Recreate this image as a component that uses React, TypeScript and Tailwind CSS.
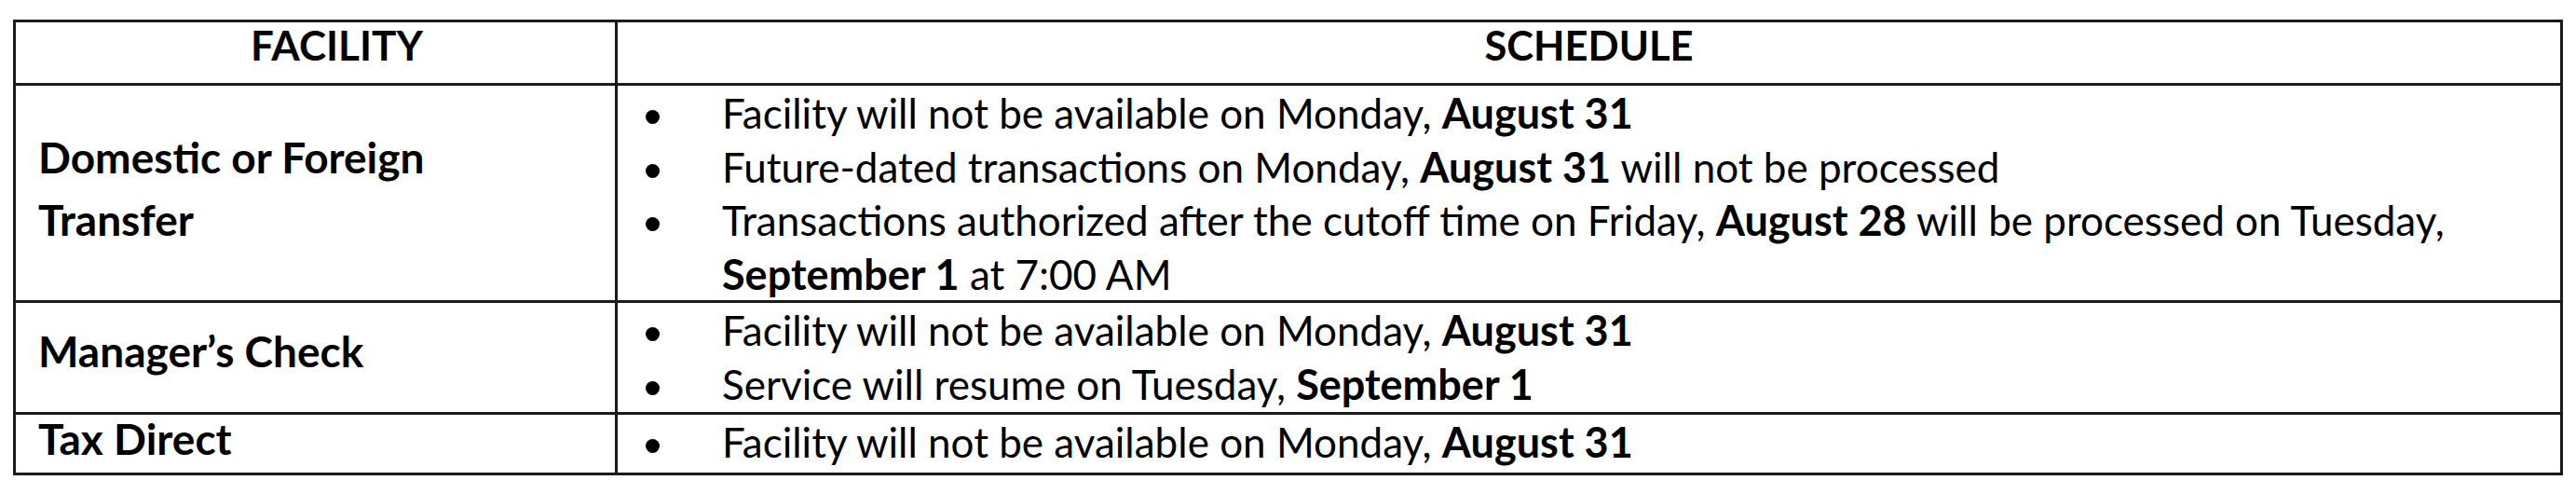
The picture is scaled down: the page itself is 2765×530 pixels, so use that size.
import React from "react";

function Dot() {
  return (
    <span className="w-[112px] shrink-0 self-start">
      <span className="block ml-[30px] mt-[25px] w-[15px] h-[15px] rounded-full bg-black" />
    </span>
  );
}

function Item({ children }: { children: React.ReactNode }) {
  return (
    <div className="flex">
      <Dot />
      <span>{children}</span>
    </div>
  );
}

function B({ children }: { children: React.ReactNode }) {
  return <b className="font-bold text-[45px]">{children}</b>;
}

export default function App() {
  const font = { fontFamily: "Lato, 'Liberation Sans', sans-serif" };
  return (
    <div className="w-[2765px] h-[530px] bg-white text-black pt-[21px] pl-[14px]" style={font}>
      <div className="grid grid-cols-[646px_2088px] grid-rows-[68px_233px_120px_65px] w-[2737px] border-l-[3px] border-t-[3px] border-[#1b1b1b] text-[44px]">
        {/* header */}
        <div className="flex items-center justify-center pl-[46px] pb-[17px] leading-[44px] font-bold border-r-[3px] border-b-[3px] border-[#1b1b1b]">
          FACILITY
        </div>
        <div className="flex items-center justify-center pb-[17px] leading-[44px] font-bold text-[43.5px] border-r-[3px] border-b-[3px] border-[#1b1b1b]">
          SCHEDULE
        </div>

        {/* row 1 */}
        <div className="flex items-center pl-[24px] pb-[9px] leading-[66.5px] font-bold text-[46px] border-r-[3px] border-b-[3px] border-[#1b1b1b]">
          <span>
            Domestic or Foreign
            <br />
            Transfer
          </span>
        </div>
        <div className="leading-[57.7px] pt-[1px] border-r-[3px] border-b-[3px] border-[#1b1b1b]">
          <Item>
            Facility will not be available on Monday, <B>August 31</B>
          </Item>
          <Item>
            Future-dated transactions on Monday, <B>August 31</B> will not be processed
          </Item>
          <Item>
            Transactions authorized after the cutoff time on Friday, <B>August 28</B> will be processed on Tuesday,
            <br />
            <B>September 1</B> at 7:00 AM
          </Item>
        </div>

        {/* row 2 */}
        <div className="flex items-center pl-[24px] pb-[14px] leading-[46px] font-bold text-[46px] border-r-[3px] border-b-[3px] border-[#1b1b1b]">
          Manager’s Check
        </div>
        <div className="leading-[57.7px] pt-[1px] border-r-[3px] border-b-[3px] border-[#1b1b1b]">
          <Item>
            Facility will not be available on Monday, <B>August 31</B>
          </Item>
          <Item>
            Service will resume on Tuesday, <B>September 1</B>
          </Item>
        </div>

        {/* row 3 */}
        <div className="flex items-center pl-[24px] pb-[11px] leading-[46px] font-bold text-[46px] border-r-[3px] border-b-[3px] border-[#1b1b1b]">
          Tax Direct
        </div>
        <div className="leading-[57.7px] pt-[1px] border-r-[3px] border-b-[3px] border-[#1b1b1b]">
          <Item>
            Facility will not be available on Monday, <B>August 31</B>
          </Item>
        </div>
      </div>
    </div>
  );
}
